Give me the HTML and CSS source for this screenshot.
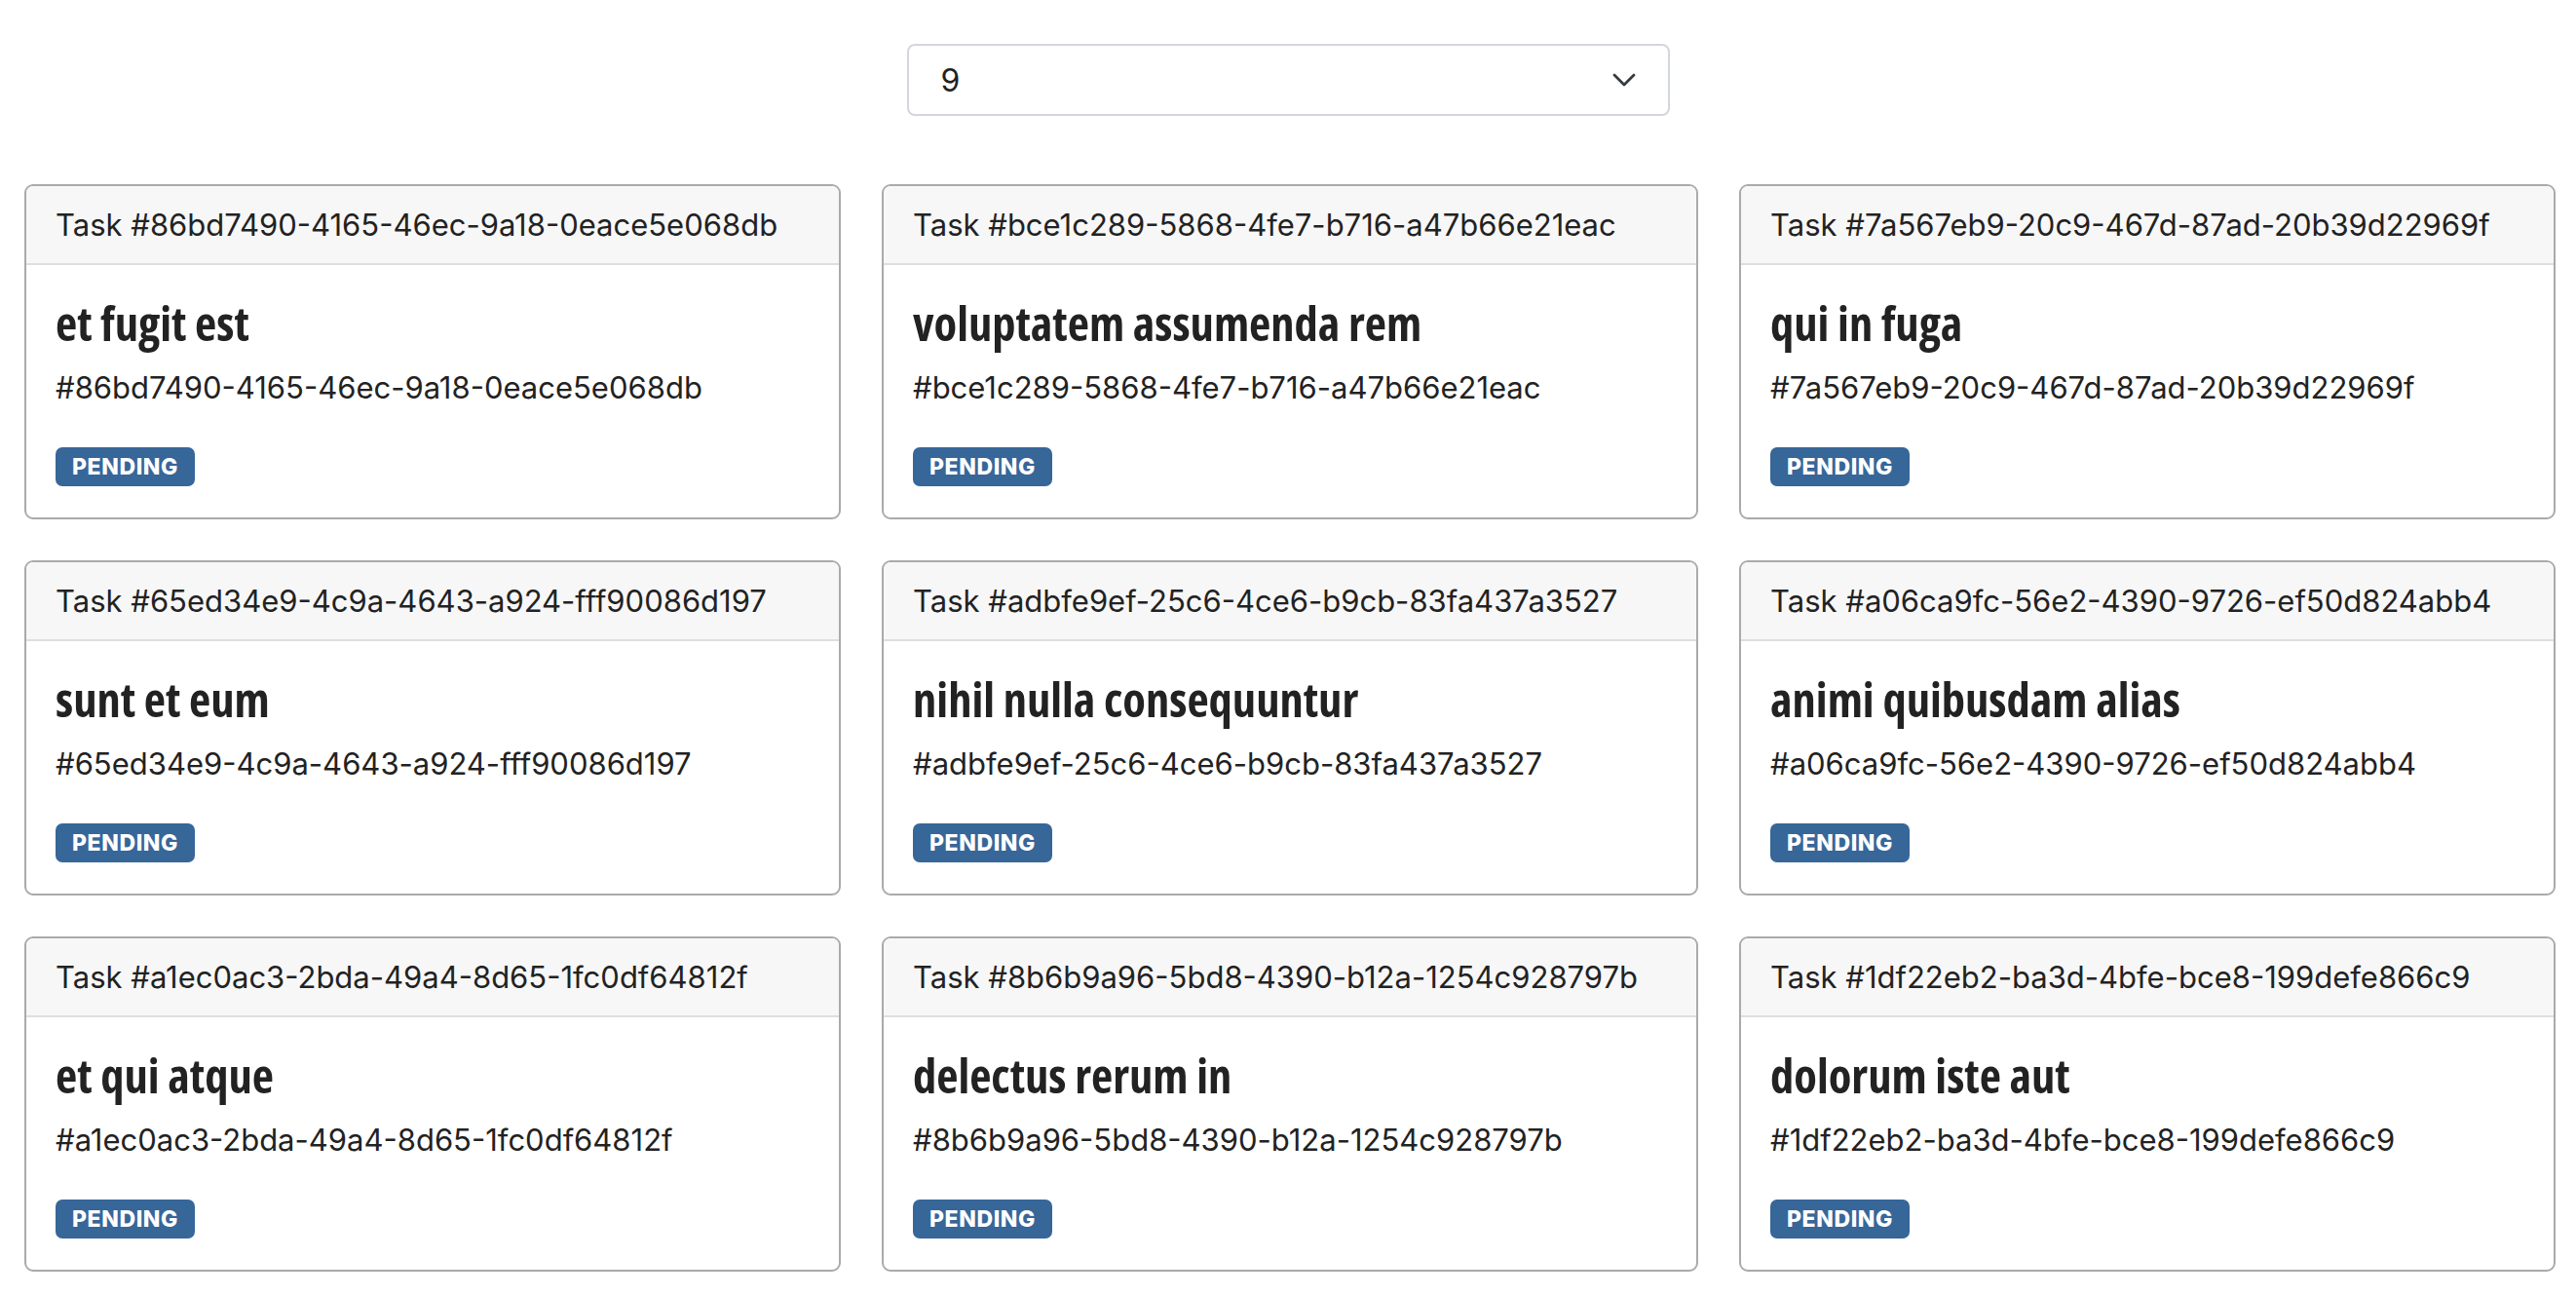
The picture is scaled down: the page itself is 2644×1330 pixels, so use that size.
FILE: index.html
```html
<!DOCTYPE html>
<html lang="en">
	<head>
		<title>Tasks</title>
		<meta charset="UTF-8">
		<meta content="width=device-width,initial-scale=1.0" name="viewport">
		<link rel="stylesheet" href="styles.css">
	</head>
	<body>
		<div id="topBar">
			<div class="pick">
				<span class="pickValue">9</span>
				<svg class="chev" width="24" height="14" viewBox="0 0 24 14"><path d="M2 2 L12 12 L22 2" fill="none" stroke="#343a40" stroke-width="2.8" stroke-linecap="round" stroke-linejoin="round"/></svg>
			</div>
		</div>
		<div id="taskGrid">
			<div class="card">
				<div class="cardHead">Task #86bd7490-4165-46ec-9a18-0eace5e068db</div>
				<div class="cardBody">
					<h4 class="title">et fugit est</h4>
					<p class="sub">#86bd7490-4165-46ec-9a18-0eace5e068db</p>
					<div class="status"><span class="badge">PENDING</span></div>
				</div>
			</div>
			<div class="card">
				<div class="cardHead">Task #bce1c289-5868-4fe7-b716-a47b66e21eac</div>
				<div class="cardBody">
					<h4 class="title">voluptatem assumenda rem</h4>
					<p class="sub">#bce1c289-5868-4fe7-b716-a47b66e21eac</p>
					<div class="status"><span class="badge">PENDING</span></div>
				</div>
			</div>
			<div class="card">
				<div class="cardHead">Task #7a567eb9-20c9-467d-87ad-20b39d22969f</div>
				<div class="cardBody">
					<h4 class="title">qui in fuga</h4>
					<p class="sub">#7a567eb9-20c9-467d-87ad-20b39d22969f</p>
					<div class="status"><span class="badge">PENDING</span></div>
				</div>
			</div>
			<div class="card">
				<div class="cardHead">Task #65ed34e9-4c9a-4643-a924-fff90086d197</div>
				<div class="cardBody">
					<h4 class="title">sunt et eum</h4>
					<p class="sub">#65ed34e9-4c9a-4643-a924-fff90086d197</p>
					<div class="status"><span class="badge">PENDING</span></div>
				</div>
			</div>
			<div class="card">
				<div class="cardHead">Task #adbfe9ef-25c6-4ce6-b9cb-83fa437a3527</div>
				<div class="cardBody">
					<h4 class="title">nihil nulla consequuntur</h4>
					<p class="sub">#adbfe9ef-25c6-4ce6-b9cb-83fa437a3527</p>
					<div class="status"><span class="badge">PENDING</span></div>
				</div>
			</div>
			<div class="card">
				<div class="cardHead">Task #a06ca9fc-56e2-4390-9726-ef50d824abb4</div>
				<div class="cardBody">
					<h4 class="title">animi quibusdam alias</h4>
					<p class="sub">#a06ca9fc-56e2-4390-9726-ef50d824abb4</p>
					<div class="status"><span class="badge">PENDING</span></div>
				</div>
			</div>
			<div class="card">
				<div class="cardHead">Task #a1ec0ac3-2bda-49a4-8d65-1fc0df64812f</div>
				<div class="cardBody">
					<h4 class="title">et qui atque</h4>
					<p class="sub">#a1ec0ac3-2bda-49a4-8d65-1fc0df64812f</p>
					<div class="status"><span class="badge">PENDING</span></div>
				</div>
			</div>
			<div class="card">
				<div class="cardHead">Task #8b6b9a96-5bd8-4390-b12a-1254c928797b</div>
				<div class="cardBody">
					<h4 class="title">delectus rerum in</h4>
					<p class="sub">#8b6b9a96-5bd8-4390-b12a-1254c928797b</p>
					<div class="status"><span class="badge">PENDING</span></div>
				</div>
			</div>
			<div class="card">
				<div class="cardHead">Task #1df22eb2-ba3d-4bfe-bce8-199defe866c9</div>
				<div class="cardBody">
					<h4 class="title">dolorum iste aut</h4>
					<p class="sub">#1df22eb2-ba3d-4bfe-bce8-199defe866c9</p>
					<div class="status"><span class="badge">PENDING</span></div>
				</div>
			</div>
		</div>
	</body>
</html>
```

FILE: styles.css
```css
body{margin:0;background:#fff;color:#222;font-family:Inter,"Noto Sans",sans-serif;font-size:31px;}
#topBar{padding-top:45px;}
.pick{width:783px;height:74px;box-sizing:border-box;margin:0 auto;border:2px solid #d3d7dc;border-radius:8px;
	display:flex;align-items:center;justify-content:space-between;padding:0 33px 0 33px;font-size:32px;color:#222;}
.chev{display:block;}
#taskGrid{display:grid;grid-template-columns:repeat(3,1fr);gap:42px;padding:70px 21px 24px 25px;}
.card{border:2px solid #aaa;border-radius:9px;overflow:hidden;background:#fff;}
.cardHead{background:#f7f7f7;border-bottom:2px solid #dedede;padding:16px 30px;line-height:47px;height:47px;white-space:nowrap;}
.cardBody{padding:32px 30px;}
.title{margin:0 0 15px 0;font-family:"Open Sans","DejaVu Sans",sans-serif;font-stretch:75%;font-weight:700;font-size:48.5px;line-height:55px;color:#222;}
.sub{margin:0 0 37px 0;line-height:48px;}
.status{display:flex;}
.badge{background:#376699;color:#fff;font-weight:800;font-size:23px;line-height:22px;padding:9px 17px;border-radius:7px;letter-spacing:0.6px;}
```
